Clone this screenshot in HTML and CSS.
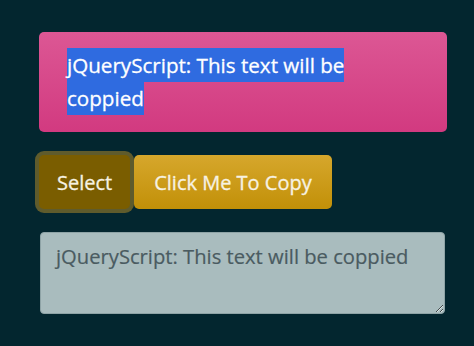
FILE: index.html
```html
<!DOCTYPE html>
<html>
<head>
<meta charset="utf-8">
<link rel="stylesheet" href="styles.css">
</head>
<body>
<main class="page">
  <div class="source">
    <p class="source-text"><span class="selected">jQueryScript: This text will be coppied</span></p>
  </div>
  <div class="actions">
    <button class="btn btn-select">Select</button>
    <button class="btn btn-copy">Click Me To Copy</button>
  </div>
  <textarea class="target">jQueryScript: This text will be coppied</textarea>
</main>
</body>
</html>
```
FILE: styles.css
```css
html, body {
  margin: 0;
  padding: 0;
  background: #03262f;
  height: 100%;
}
.page {
  padding: 32px 27px 0 39px;
  font-family: "Open Sans", "Liberation Sans", sans-serif;
}
.source {
  background: linear-gradient(#dc5794, #d23a80);
  border-radius: 5px;
  padding: 17px 62px 17px 28px;
  width: 318px;
}
.source-text {
  margin: 0;
  font-size: 20.6px;
  line-height: 33px;
  color: #ffffff;
  -webkit-text-stroke: 0.3px currentColor;
}
.selected {
  background: #2f6be0;
  padding: 3px 0;
}
.actions {
  display: flex;
  gap: 4px;
  margin-top: 23px;
}
.btn {
  font-family: inherit;
  font-size: 20px;
  color: #f7f2e2;
  -webkit-text-stroke: 0.3px currentColor;
  border: none;
  border-radius: 5px;
  height: 54px;
  padding: 0 18px;
  cursor: pointer;
}
.btn-select {
  background: #7a5d00;
  box-shadow: 0 0 0 4px #5f5b2c;
}
.btn-copy {
  padding: 0 20px;
  background: linear-gradient(#d6a72c, #c29008);
}
.target {
  display: block;
  box-sizing: border-box;
  margin: 23px 0 0 1px;
  width: 405px;
  height: 82px;
  background: #a9bcbe;
  border: 1px solid #8ea3a6;
  border-radius: 4px;
  padding: 9px 15px;
  font-family: inherit;
  font-size: 20.2px;
  line-height: 28px;
  color: #4a5b61;
  -webkit-text-stroke: 0.2px currentColor;
}
```
